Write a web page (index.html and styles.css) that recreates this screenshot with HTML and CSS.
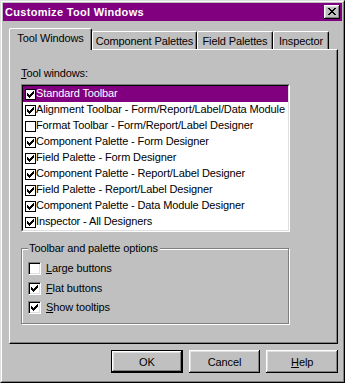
FILE: index.html
```html
<!DOCTYPE html>
<html>
<head>
<meta charset="utf-8">
<title>Customize Tool Windows</title>
<link rel="stylesheet" href="styles.css">
</head>
<body>
<div class="window">
  <div class="frame">
    <div class="caption">
      <span class="title">Customize Tool Windows</span>
      <div class="close"><svg width="8" height="7" viewBox="0 0 8 7" shape-rendering="crispEdges"><path d="M0 0h2v1H0zM6 0h2v1H6zM1 1h2v1H1zM5 1h2v1H5zM2 2h4v1H2zM3 3h2v1H3zM2 4h4v1H2zM1 5h2v1H1zM5 5h2v1H5zM0 6h2v1H0zM6 6h2v1H6z" fill="#000"/></svg></div>
    </div>
    <div class="body">
      <div class="tabs">
        <div class="tab active w1">Tool Windows</div>
        <div class="tab w2">Component Palettes</div>
        <div class="tab w3">Field Palettes</div>
        <div class="tab w4">Inspector</div>
      </div>
      <div class="panel">
        <div class="label"><u>T</u>ool windows:</div>
        <div class="list">
          <div class="list-inner">
            <div class="item selected"><span class="fbox"><svg class="check" width="7" height="7" viewBox="0 0 7 7" shape-rendering="crispEdges"><path d="M0 2h1v3H0zM1 3h1v3H1zM2 4h1v3H2zM3 3h1v3H3zM4 2h1v3H4zM5 1h1v3H5zM6 0h1v3H6z"/></svg></span><span class="txt">Standard Toolbar</span></div>
            <div class="item"><span class="fbox"><svg class="check" width="7" height="7" viewBox="0 0 7 7" shape-rendering="crispEdges"><path d="M0 2h1v3H0zM1 3h1v3H1zM2 4h1v3H2zM3 3h1v3H3zM4 2h1v3H4zM5 1h1v3H5zM6 0h1v3H6z"/></svg></span><span class="txt">Alignment Toolbar - Form/Report/Label/Data Module</span></div>
            <div class="item"><span class="fbox"></span><span class="txt">Format Toolbar - Form/Report/Label Designer</span></div>
            <div class="item"><span class="fbox"><svg class="check" width="7" height="7" viewBox="0 0 7 7" shape-rendering="crispEdges"><path d="M0 2h1v3H0zM1 3h1v3H1zM2 4h1v3H2zM3 3h1v3H3zM4 2h1v3H4zM5 1h1v3H5zM6 0h1v3H6z"/></svg></span><span class="txt">Component Palette - Form Designer</span></div>
            <div class="item"><span class="fbox"><svg class="check" width="7" height="7" viewBox="0 0 7 7" shape-rendering="crispEdges"><path d="M0 2h1v3H0zM1 3h1v3H1zM2 4h1v3H2zM3 3h1v3H3zM4 2h1v3H4zM5 1h1v3H5zM6 0h1v3H6z"/></svg></span><span class="txt">Field Palette - Form Designer</span></div>
            <div class="item"><span class="fbox"><svg class="check" width="7" height="7" viewBox="0 0 7 7" shape-rendering="crispEdges"><path d="M0 2h1v3H0zM1 3h1v3H1zM2 4h1v3H2zM3 3h1v3H3zM4 2h1v3H4zM5 1h1v3H5zM6 0h1v3H6z"/></svg></span><span class="txt">Component Palette - Report/Label Designer</span></div>
            <div class="item"><span class="fbox"><svg class="check" width="7" height="7" viewBox="0 0 7 7" shape-rendering="crispEdges"><path d="M0 2h1v3H0zM1 3h1v3H1zM2 4h1v3H2zM3 3h1v3H3zM4 2h1v3H4zM5 1h1v3H5zM6 0h1v3H6z"/></svg></span><span class="txt">Field Palette - Report/Label Designer</span></div>
            <div class="item"><span class="fbox"><svg class="check" width="7" height="7" viewBox="0 0 7 7" shape-rendering="crispEdges"><path d="M0 2h1v3H0zM1 3h1v3H1zM2 4h1v3H2zM3 3h1v3H3zM4 2h1v3H4zM5 1h1v3H5zM6 0h1v3H6z"/></svg></span><span class="txt">Component Palette - Data Module Designer</span></div>
            <div class="item"><span class="fbox"><svg class="check" width="7" height="7" viewBox="0 0 7 7" shape-rendering="crispEdges"><path d="M0 2h1v3H0zM1 3h1v3H1zM2 4h1v3H2zM3 3h1v3H3zM4 2h1v3H4zM5 1h1v3H5zM6 0h1v3H6z"/></svg></span><span class="txt">Inspector - All Designers</span></div>
          </div>
        </div>
        <div class="group">
          <div class="legend">Toolbar and palette options</div>
          <div class="opts">
            <div class="opt"><span class="cbox"></span><span class="txt"><u>L</u>arge buttons</span></div>
            <div class="opt"><span class="cbox"><svg class="check" width="7" height="7" viewBox="0 0 7 7" shape-rendering="crispEdges"><path d="M0 2h1v3H0zM1 3h1v3H1zM2 4h1v3H2zM3 3h1v3H3zM4 2h1v3H4zM5 1h1v3H5zM6 0h1v3H6z"/></svg></span><span class="txt"><u>F</u>lat buttons</span></div>
            <div class="opt"><span class="cbox"><svg class="check" width="7" height="7" viewBox="0 0 7 7" shape-rendering="crispEdges"><path d="M0 2h1v3H0zM1 3h1v3H1zM2 4h1v3H2zM3 3h1v3H3zM4 2h1v3H4zM5 1h1v3H5zM6 0h1v3H6z"/></svg></span><span class="txt"><u>S</u>how tooltips</span></div>
          </div>
        </div>
      </div>
      <div class="buttons">
        <div class="btn default"><span>OK</span></div>
        <div class="btn"><span>Cancel</span></div>
        <div class="btn"><span><u>H</u>elp</span></div>
      </div>
    </div>
  </div>
</div>
</body>
</html>
```
FILE: styles.css
```css
html, body {
  margin: 0;
  padding: 0;
  background: #c0c0c0;
}
body {
  font-family: "Liberation Sans", Arial, sans-serif;
  font-size: 11px;
  letter-spacing: -0.12px;
  color: #000;
}
.window {
  width: 345px;
  height: 383px;
  box-sizing: border-box;
  border: 1px solid;
  border-color: #dfdfdf #000 #000 #dfdfdf;
  background: #c0c0c0;
}
.frame {
  height: 100%;
  box-sizing: border-box;
  border: 1px solid;
  border-color: #fff #808080 #808080 #fff;
  padding: 1px;
}
.caption {
  height: 18px;
  background: #800080;
  display: flex;
  align-items: flex-start;
}
.title {
  color: #fff;
  font-weight: bold;
  line-height: 18px;
  padding-left: 2px;
  letter-spacing: 0.3px;
  white-space: nowrap;
}
.close {
  margin: 2px 2px 0 auto;
  width: 16px;
  height: 14px;
  background: #c0c0c0;
  box-shadow: inset -1px -1px #000, inset 1px 1px #fff, inset -2px -2px #808080, inset 2px 2px #dfdfdf;
  display: flex;
  padding: 3px 0 0 4px;
  box-sizing: border-box;
}
.close svg { display: block; }
.body {
  padding: 7px 4px 0 6px;
}
.tabs {
  display: flex;
  align-items: flex-end;
  height: 21px;
}
.tab {
  height: 18px;
  box-sizing: border-box;
  border-top: 1px solid #fff;
  border-left: 1px solid #fff;
  border-right: 1px solid #000;
  border-radius: 2px 2px 0 0;
  box-shadow: inset -1px 0 #808080;
  padding-top: 2px;
  line-height: 15px;
  text-align: center;
  white-space: nowrap;
  background: #c0c0c0;
}
.tab.active {
  height: 22px;
  margin-bottom: -1px;
  position: relative;
  z-index: 1;
  padding-top: 2px;
}
.w1 { width: 83px; }
.w2 { width: 105px; }
.w3 { width: 76px; }
.w4 { width: 56px; }
.panel {
  height: 295px;
  box-sizing: border-box;
  border: 1px solid;
  border-color: #fff #000 #000 #fff;
  box-shadow: inset -1px -1px #808080;
  padding: 17px 0 0 11px;
}
.label {
  line-height: 13px;
  height: 13px;
}
u {
  text-decoration: underline;
  text-underline-offset: 1px;
}
.list {
  margin-top: 4px;
  width: 269px;
  height: 148px;
  box-sizing: border-box;
  border: 1px solid;
  border-color: #808080 #fff #fff #808080;
}
.list-inner {
  height: 100%;
  box-sizing: border-box;
  border: 1px solid;
  border-color: #000 #dfdfdf #dfdfdf #000;
  background: #fff;
}
.item {
  height: 16px;
  display: flex;
  align-items: flex-start;
  white-space: nowrap;
}
.item.selected {
  background: #800080;
  color: #fff;
}
.item .txt {
  line-height: 15px;
}
.fbox {
  width: 11px;
  height: 11px;
  box-sizing: border-box;
  margin: 3px 0 0 2px;
  border: 1px solid #000;
  background: #fff;
  padding: 1px;
  flex: none;
}
.check {
  display: block;
  fill: #000;
}
.group {
  margin-top: 16px;
  width: 268px;
  height: 76px;
  box-sizing: border-box;
  border: 1px solid #808080;
  box-shadow: 1px 1px 0 #fff, inset 1px 1px 0 #fff;
}
.legend {
  width: fit-content;
  margin: -7px 0 0 6px;
  padding: 0 2px 0 1px;
  line-height: 13px;
  background: #c0c0c0;
  white-space: nowrap;
}
.opts {
  margin-top: 7px;
  padding-left: 6px;
  display: flex;
  flex-direction: column;
  gap: 6.5px;
}
.opt {
  display: flex;
  align-items: flex-start;
  height: 13px;
}
.opt .txt {
  line-height: 13px;
  margin-left: 5px;
}
.cbox {
  width: 13px;
  height: 13px;
  box-sizing: border-box;
  border: 1px solid;
  border-color: #808080 #fff #fff #808080;
  box-shadow: inset 1px 1px #000, inset -1px -1px #dfdfdf;
  background: #fff;
  padding: 2px;
  flex: none;
}
.buttons {
  display: flex;
  gap: 6px;
  margin-top: 6px;
  padding-left: 102px;
}
.btn {
  width: 72px;
  height: 23px;
  box-sizing: border-box;
  display: flex;
  align-items: center;
  justify-content: center;
  background: #c0c0c0;
  box-shadow: inset -1px -1px #000, inset 1px 1px #fff, inset -2px -2px #808080, inset 2px 2px #dfdfdf;
  line-height: 13px;
  padding-top: 1px;
}
.btn.default {
  border: 1px solid #000;
}
```
